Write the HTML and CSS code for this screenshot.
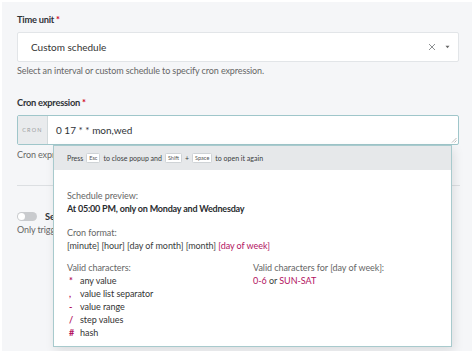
FILE: index.html
```html
<!DOCTYPE html>
<html>
<head>
<meta charset="utf-8">
<link rel="stylesheet" href="styles.css">
</head>
<body>
<div class="page">
  <div class="field">
    <div class="label">Time unit <span class="req">*</span></div>
    <div class="select">
      <span class="select-value">Custom schedule</span>
      <span class="select-icons">
        <svg class="clear" width="8" height="8" viewBox="0 0 8 8"><path d="M1 1L7 7M7 1L1 7" stroke="#808386" stroke-width="0.9" fill="none"/></svg>
        <svg class="caret" width="5" height="4" viewBox="0 0 5 4"><path d="M0.5 0.8H4.5L2.5 3.3Z" fill="#666"/></svg>
      </span>
    </div>
    <div class="help">Select an interval or custom schedule to specify cron expression.</div>
  </div>

  <div class="field cron-field">
    <div class="label">Cron expression <span class="req">*</span></div>
    <div class="cron-input">
      <span class="addon">CRON</span>
      <span class="cron-value">0 17 * * mon,wed</span>
      <svg class="resize" width="6" height="6" viewBox="0 0 6 6"><path d="M5.5 1L1 5.5M5.5 3.5L3.5 5.5" stroke="#aaa" stroke-width="0.8" fill="none"/></svg>
    </div>
    <div class="help">Cron expression</div>

    <div class="popup">
      <div class="popup-header">
        <span>Press</span><kbd>Esc</kbd><span>to close popup and</span><kbd>Shift</kbd><span class="plus">+</span><kbd>Space</kbd><span>to open it again</span>
      </div>
      <div class="popup-body">
        <div class="section">
          <div class="muted">Schedule preview:</div>
          <div class="strong">At 05:00 PM, only on Monday and Wednesday</div>
        </div>
        <div class="section">
          <div class="muted">Cron format:</div>
          <div class="dark">[minute] [hour] [day of month] [month] <span class="hl">[day of week]</span></div>
        </div>
        <div class="section columns">
          <div class="col-left">
            <div class="muted">Valid characters:</div>
            <ul class="chars">
              <li><span class="sym">*</span><span>any value</span></li>
              <li><span class="sym">,</span><span>value list separator</span></li>
              <li><span class="sym">-</span><span>value range</span></li>
              <li><span class="sym">/</span><span>step values</span></li>
              <li><span class="sym">#</span><span>hash</span></li>
            </ul>
          </div>
          <div class="col-right">
            <div class="muted">Valid characters for [day of week]:</div>
            <div class="dark"><span class="hl">0-6</span> or <span class="hl">SUN-SAT</span></div>
          </div>
        </div>
      </div>
    </div>
  </div>

  <div class="divider"></div>

  <div class="toggle-row">
    <span class="toggle"><span class="knob"></span></span>
    <span class="toggle-label">Send</span>
  </div>
  <div class="help help-tight">Only trigger</div>
</div>
</body>
</html>
```

FILE: styles.css
```css
html, body {
  margin: 0;
  padding: 0;
  background: #ffffff;
}

body {
  font-family: Lato, "Liberation Sans", sans-serif;
  color: #2f3337;
}

.page {
  margin: 2px;
  width: 470px;
  height: 349px;
  box-sizing: border-box;
  padding: 12px 13px 0 15px;
  background: #f5f6f8;
  overflow: hidden;
}

.label {
  font-size: 9.3px;
  font-weight: 700;
  letter-spacing: -0.25px;
  line-height: 12px;
  color: #2f3337;
  margin-bottom: 6px;
}

.req {
  color: #d0021b;
}

.select {
  height: 30px;
  box-sizing: border-box;
  background: #fff;
  border: 1px solid #e2e5e8;
  border-radius: 2px;
  display: flex;
  align-items: center;
  justify-content: space-between;
  padding: 0 8px 0 13px;
  font-size: 10px;
  color: #333;
}

.select-icons {
  display: flex;
  align-items: center;
  gap: 9px;
}

.help {
  font-size: 9px;
  letter-spacing: -0.1px;
  line-height: 12px;
  color: #666;
  margin-top: 3px;
  white-space: nowrap;
}

.field + .field {
  margin-top: 20px;
}

.cron-field {
  position: relative;
}

.cron-input {
  height: 30px;
  box-sizing: border-box;
  background: #fff;
  border: 1px solid #9fc6ca;
  border-radius: 2px;
  display: flex;
  position: relative;
}

.addon {
  width: 29px;
  background: #e9ebed;
  border-right: 1px solid #d3dadc;
  display: flex;
  align-items: center;
  justify-content: center;
  font-size: 5.5px;
  letter-spacing: 1.2px;
  color: #9a9da0;
}

.cron-value {
  align-self: center;
  padding-left: 8px;
  font-size: 10px;
  color: #2f3337;
}

.resize {
  position: absolute;
  right: 1px;
  bottom: 1px;
}

.cron-field .help {
  margin-top: 4px;
}

.popup {
  position: absolute;
  left: 36px;
  top: 48px;
  width: 399px;
  height: 202px;
  box-sizing: border-box;
  background: #fff;
  border: 1px solid #a8cacd;
  box-shadow: 2px 4px 10px rgba(0, 0, 0, 0.10);
  z-index: 2;
}

.popup-header {
  height: 24px;
  background: #e6e8ea;
  display: flex;
  align-items: center;
  padding-left: 13px;
  font-size: 7px;
  color: #3a3d40;
  white-space: nowrap;
}

kbd {
  display: inline-block;
  font-family: inherit;
  font-size: 5.5px;
  line-height: 8px;
  padding: 0 2px;
  margin: 0 3px;
  background: #fff;
  border: 1px solid #cfd3d6;
  border-radius: 1.5px;
  color: #555;
}

.popup-body {
  padding: 19px 14px 0 13px;
  font-size: 9px;
  letter-spacing: -0.05px;
  line-height: 13px;
}

.section + .section {
  margin-top: 11px;
}

.section.columns {
  margin-top: 9px;
  display: flex;
}

.col-left {
  width: 186px;
}

.muted {
  color: #666;
}

.strong {
  font-weight: 700;
  letter-spacing: -0.2px;
  color: #2a2d30;
}

.dark {
  color: #3a3d40;
}

.hl {
  color: #b3135f;
}

.chars {
  list-style: none;
  margin: 0;
  padding: 0;
}

.chars li {
  display: flex;
  color: #333;
}

.sym {
  width: 13px;
  padding-left: 2px;
  box-sizing: border-box;
  color: #b3135f;
  font-weight: 700;
}

.divider {
  height: 1px;
  background: #dcdfe2;
  margin-top: 24px;
  width: 443px;
}

.toggle-row {
  margin-top: 24px;
  display: flex;
  align-items: center;
  height: 12px;
}

.toggle {
  width: 20px;
  height: 9px;
  border-radius: 5px;
  background: #c9cbce;
  position: relative;
  display: inline-block;
}

.knob {
  position: absolute;
  left: 1px;
  top: 1px;
  width: 7px;
  height: 7px;
  border-radius: 50%;
  background: #fff;
}

.toggle-label {
  margin-left: 8px;
  font-size: 9.3px;
  font-weight: 700;
  color: #2f3337;
}

.help-tight {
  margin-top: 2px;
}
```
